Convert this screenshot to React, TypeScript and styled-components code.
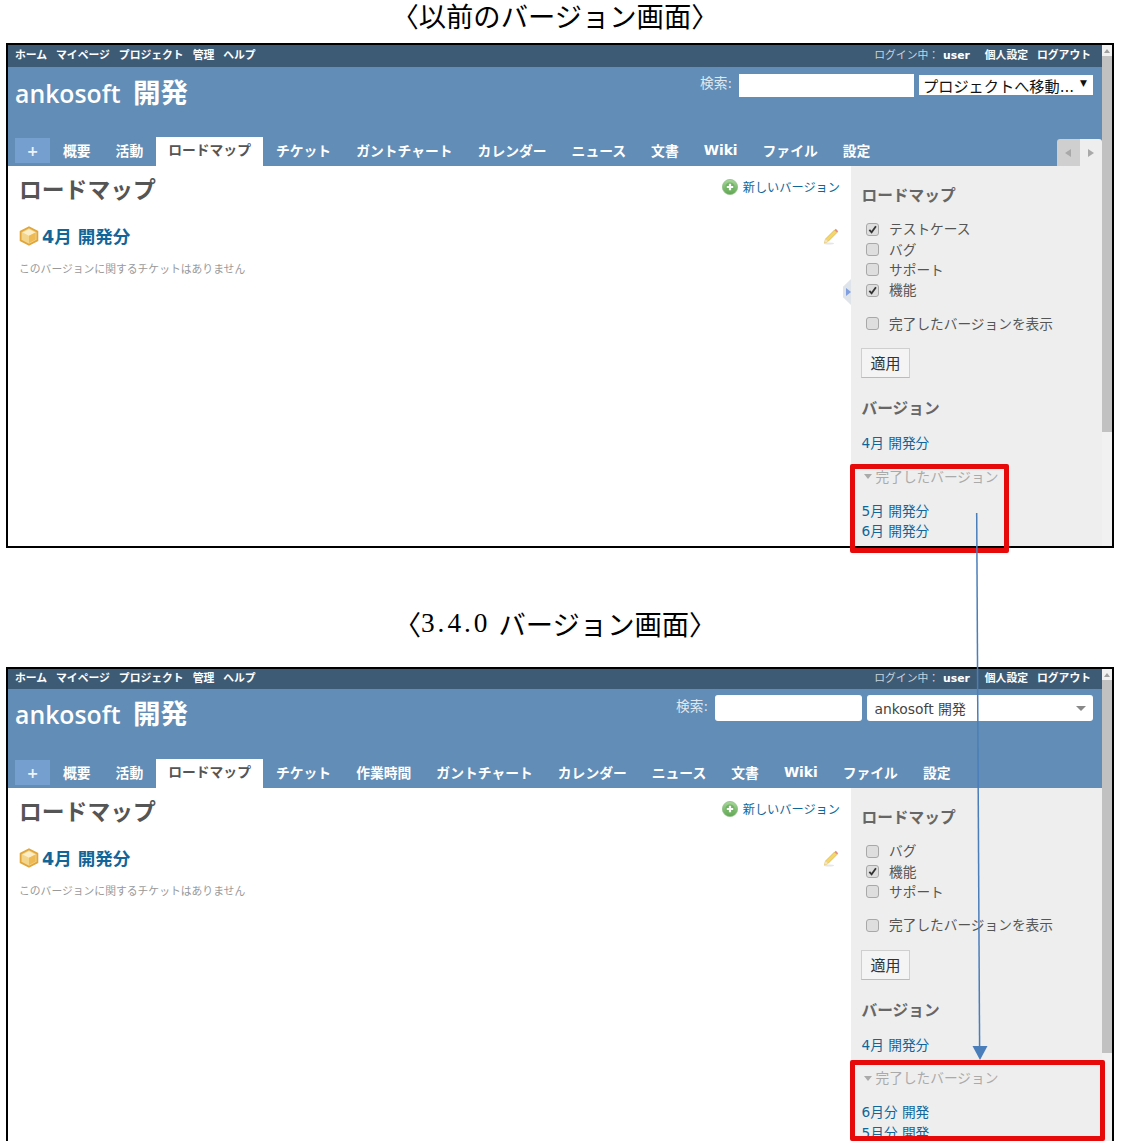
import React from 'react';
import styled, { createGlobalStyle } from 'styled-components';

const GlobalStyle = createGlobalStyle`
  html, body {
    margin: 0;
    padding: 0;
    background: #fff;
  }
  body {
    font-family: "DejaVu Sans", "Noto Sans CJK JP", sans-serif;
  }
`;

const Page = styled.div`
  position: relative;
  width: 1126px;
  height: 1147px;
  overflow: hidden;
`;

const Caption = styled.div<{ $height: number; $bottom: number }>`
  width: 1110px;
  height: ${(p) => p.$height}px;
  display: flex;
  align-items: flex-end;
  justify-content: center;
  padding-bottom: ${(p) => p.$bottom}px;
  box-sizing: border-box;
  font-family: "Noto Sans CJK JP", sans-serif;
  font-size: 27.3px;
  font-weight: 400;
  line-height: 28px;
  white-space: pre;
  color: #000;
`;

const CaptionNumber = styled.span`
  font-family: "Liberation Serif", serif;
  letter-spacing: 3px;
  margin-right: 8px;
`;

const Frame = styled.div<{ $height: number; $open?: boolean }>`
  display: flex;
  box-sizing: border-box;
  width: 1108px;
  height: ${(p) => p.$height}px;
  margin-left: 6px;
  border: 2px solid #000;
  border-bottom: ${(p) => (p.$open ? 'none' : '2px solid #000')};
  overflow: hidden;
`;

const Viewport = styled.div`
  display: flex;
  flex-direction: column;
  width: 1094px;
  flex: none;
`;

const TopMenu = styled.div<{ $height: number }>`
  display: flex;
  align-items: center;
  justify-content: space-between;
  box-sizing: border-box;
  height: ${(p) => p.$height}px;
  padding: 0 11px 4px 7px;
  background: #3e5b76;
  font-size: 10.8px;
  font-weight: 700;
  color: #fff;
  flex: none;
`;

const MenuGroup = styled.div`
  display: flex;
  gap: 9px;
  align-items: center;
`;

const LoggedAs = styled.span`
  font-weight: 400;
  color: #c9d4de;
  margin-right: 6px;
  b {
    font-weight: 700;
    color: #fff;
    margin-left: 4px;
  }
`;

const Header = styled.div`
  position: relative;
  display: flex;
  flex-direction: column;
  justify-content: space-between;
  height: 99px;
  background: #628db6;
  flex: none;
`;

const HeaderTop = styled.div<{ $modern?: boolean }>`
  display: flex;
  justify-content: space-between;
  align-items: flex-start;
  padding: ${(p) => (p.$modern ? '6px 9px 0 7px' : '7px 9px 0 7px')};
`;

const Title = styled.h1`
  margin: 3px 0 0;
  font-family: "Open Sans", "Noto Sans CJK JP", sans-serif;
  font-size: 24.8px;
  line-height: 32px;
  font-weight: 600;
  word-spacing: 6px;
  color: #fff;
`;

const TitleKanji = styled.span`
  font-size: 27.5px;
`;

const SearchBox = styled.div`
  display: flex;
  align-items: flex-start;
  gap: 5px;
`;

const SearchLabel = styled.span<{ $modern?: boolean }>`
  font-size: 13.7px;
  line-height: 18px;
  margin-top: ${(p) => (p.$modern ? 2 : 0)}px;
  margin-right: 2px;
  color: #dfe8f0;
`;

const SearchInput = styled.div<{ $modern?: boolean }>`
  width: ${(p) => (p.$modern ? 147 : 175)}px;
  height: ${(p) => (p.$modern ? 26 : 23)}px;
  background: #fff;
  border-radius: ${(p) => (p.$modern ? 3 : 0)}px;
`;

const PlainJump = styled.div`
  display: flex;
  align-items: center;
  justify-content: space-between;
  box-sizing: border-box;
  width: 174px;
  height: 20px;
  margin-top: 1px;
  padding: 0 6px 0 4px;
  background: #fff;
  font-size: 15.2px;
  color: #111;
  white-space: nowrap;
  i {
    font-style: normal;
    font-size: 9px;
    line-height: 10px;
    margin-bottom: 4px;
  }
`;

const RichJump = styled.div`
  display: flex;
  align-items: center;
  justify-content: space-between;
  box-sizing: border-box;
  width: 226px;
  height: 26px;
  padding: 0 7px 0 7.5px;
  background: #fff;
  border-radius: 3px;
  font-size: 13.9px;
  color: #444;
`;

const JumpArrow = styled.div`
  width: 0;
  height: 0;
  border-left: 5px solid transparent;
  border-right: 5px solid transparent;
  border-top: 5px solid #888;
`;

const Tabs = styled.div`
  display: flex;
  align-items: stretch;
  height: 29px;
  padding-left: 7px;
`;

const AddTab = styled.div`
  display: flex;
  align-items: center;
  justify-content: center;
  width: 35px;
  height: 25px;
  margin-top: 1px;
  padding-top: 1px;
  box-sizing: border-box;
  background: #759fcf;
  color: #eef3f8;
  font-size: 14px;
  font-weight: 700;
`;

const Tab = styled.div<{ $selected?: boolean }>`
  display: flex;
  align-items: center;
  padding: 0 12px ${(p) => (p.$selected ? 6 : 4)}px;
  margin-left: 1px;
  font-size: 13.8px;
  font-weight: 700;
  white-space: nowrap;
  color: ${(p) => (p.$selected ? '#555' : '#fff')};
  background: ${(p) => (p.$selected ? '#fff' : 'transparent')};
`;

const TabScroller = styled.div`
  position: absolute;
  right: 0;
  bottom: 0;
  display: flex;
  width: 45px;
  height: 27px;
  border-radius: 3px 3px 0 0;
  overflow: hidden;
`;

const ScrollSide = styled.div<{ $shade: string }>`
  display: flex;
  align-items: center;
  justify-content: center;
  flex: 1;
  background: ${(p) => p.$shade};
`;

const Main = styled.div`
  position: relative;
  display: flex;
  flex: 1;
  min-height: 0;
`;

const Content = styled.div`
  flex: 1;
  min-width: 0;
  padding: 12px 11px 0 11px;
  background: #fff;
`;

const TitleRow = styled.div`
  display: flex;
  justify-content: space-between;
  align-items: flex-start;
`;

const PageHeading = styled.h2`
  margin: 0;
  font-size: 22.8px;
  line-height: 24px;
  font-weight: 700;
  color: #555;
`;

const NewVersion = styled.a`
  display: flex;
  align-items: center;
  gap: 5px;
  height: 18px;
  font-size: 12.2px;
  color: #169;
`;

const VersionRow = styled.div`
  display: flex;
  align-items: center;
  justify-content: space-between;
  height: 24px;
  margin-top: 21px;
  padding-right: 1px;
  svg {
    margin-top: 2px;
  }
`;

const VersionName = styled.div`
  display: flex;
  align-items: center;
  gap: 3px;
  font-size: 17.5px;
  font-weight: 700;
  color: #169;
`;

const EmptyNote = styled.p`
  margin: 15px 0 0;
  font-size: 10.8px;
  line-height: 16px;
  color: #999;
`;

const Sidebar = styled.div`
  width: 251px;
  flex: none;
  box-sizing: border-box;
  padding: 20px 0 0 10.5px;
  background: #eee;
`;

const SideHeading = styled.h3<{ $gap: number }>`
  margin: ${(p) => p.$gap}px 0 0;
  font-size: 15.7px;
  line-height: 20px;
  font-weight: 700;
  color: #666;
`;

const CheckRows = styled.div`
  margin-top: 12px;
  margin-bottom: 13px;
`;

const CheckRow = styled.div`
  display: flex;
  align-items: center;
  gap: 10px;
  height: 20.4px;
  padding-left: 4.5px;
  font-size: 13.7px;
  color: #555;
`;

const CheckBox = styled.span`
  display: flex;
  align-items: center;
  justify-content: center;
  box-sizing: border-box;
  width: 13px;
  height: 13px;
  margin-top: 2px;
  border: 1px solid #a8a8a8;
  border-radius: 3px;
  background: #dedede;
  flex: none;
`;

const ApplyButton = styled.div`
  display: flex;
  align-items: center;
  justify-content: center;
  box-sizing: border-box;
  width: 49px;
  height: 30px;
  margin: 15px 0 0 -0.5px;
  border: 1px solid #cfcfcf;
  border-bottom-color: #bbb;
  background: #f4f4f4;
  font-size: 15px;
  color: #333;
`;

const SideLink = styled.div<{ $gap?: number }>`
  margin-top: ${(p) => p.$gap ?? 0}px;
  font-size: 13.7px;
  line-height: 20.6px;
  color: #169;
`;

const ClosedToggle = styled.div`
  display: flex;
  align-items: center;
  gap: 4px;
  margin-top: 13px;
  padding-left: 2px;
  font-size: 13.7px;
  line-height: 20px;
  color: #aaa;
`;

const DownMark = styled.span`
  width: 0;
  height: 0;
  border-left: 4px solid transparent;
  border-right: 4px solid transparent;
  border-top: 5px solid #aaa;
`;

const SideToggle = styled.div`
  position: absolute;
  right: 251px;
  top: 113px;
  display: flex;
  align-items: center;
  justify-content: flex-end;
  width: 8px;
  height: 26px;
  background: #dfe3ea;
  clip-path: polygon(100% 0, 100% 100%, 0 70%, 0 30%);
  &::after {
    content: '';
    border-left: 5px solid #7f9fe0;
    border-top: 4px solid transparent;
    border-bottom: 4px solid transparent;
  }
`;

const ScrollBar = styled.div`
  display: flex;
  flex-direction: column;
  width: 10px;
  flex: none;
  background: #f1f1f1;
`;

const ScrollUp = styled.div`
  display: flex;
  align-items: center;
  justify-content: center;
  height: 11px;
  background: #f1f1f1;
  &::after {
    content: '';
    border-left: 3px solid transparent;
    border-right: 3px solid transparent;
    border-bottom: 4px solid #a0a0a0;
  }
`;

const ScrollThumb = styled.div<{ $height: number }>`
  height: ${(p) => p.$height}px;
  background: #c1c1c1;
`;

const RedBox = styled.div<{ $left: number; $top: number; $width: number; $height: number }>`
  position: absolute;
  left: ${(p) => p.$left}px;
  top: ${(p) => p.$top}px;
  width: ${(p) => p.$width}px;
  height: ${(p) => p.$height}px;
  box-sizing: border-box;
  border: 5px solid #e60a0a;
  border-radius: 2px;
`;

const ArrowLayer = styled.svg`
  position: absolute;
  left: 0;
  top: 0;
  width: 1126px;
  height: 1147px;
  pointer-events: none;
`;

const CheckMark = () => (
  <svg width="9" height="9" viewBox="0 0 10 10">
    <path d="M1.5 5.5 L4 8.2 L8.8 1.5" fill="none" stroke="#333" strokeWidth="2" />
  </svg>
);

const PlusIcon = () => (
  <svg width="16" height="16" viewBox="0 0 16 16">
    <defs>
      <linearGradient id="plusGreen" x1="0" y1="0" x2="0" y2="1">
        <stop offset="0" stopColor="#a9d89c" />
        <stop offset="1" stopColor="#5fa552" />
      </linearGradient>
    </defs>
    <circle cx="8" cy="8" r="7.6" fill="url(#plusGreen)" stroke="#8fbf84" strokeWidth="0.8" />
    <circle cx="8" cy="8" r="4.6" fill="#6fb561" />
    <path d="M8 4.8 V11.2 M4.8 8 H11.2" stroke="#fff" strokeWidth="2.2" />
  </svg>
);

const PencilIcon = () => (
  <svg width="16" height="17" viewBox="0 0 16 17">
    <ellipse cx="6" cy="15.5" rx="5" ry="1" fill="#e6e6e6" />
    <path d="M11.5 2 L14 4.5 L5 13.5 L1.5 15 L2.5 11 Z" fill="#f3d76a" stroke="#d9b44a" strokeWidth="0.7" />
    <path d="M11.5 2 L12.8 0.8 L15.2 3.2 L14 4.5 Z" fill="#e58a8a" />
    <path d="M2.5 11 L5 13.5 L1.5 15 Z" fill="#f6e3c4" />
  </svg>
);

const PackageIcon = () => (
  <svg width="20" height="20" viewBox="0 0 20 20">
    <path
      d="M10 1.2 L18.4 5.6 V14.4 L10 18.8 L1.6 14.4 V5.6 Z"
      fill="#f3d58c"
      stroke="#e0a63c"
      strokeWidth="1.8"
      strokeLinejoin="round"
    />
    <path d="M10 3.2 L16.4 6.5 L10 9.8 L3.6 6.5 Z" fill="#fbeec8" />
    <path d="M10 9.8 V17 L16.6 13.6 V6.5 Z" fill="#eeba55" />
  </svg>
);

const ScrollTriangle = ({ left, color }: { left?: boolean; color: string }) => (
  <svg width="6" height="8" viewBox="0 0 6 8">
    <path d={left ? 'M6 0 V8 L0 4 Z' : 'M0 0 V8 L6 4 Z'} fill={color} />
  </svg>
);

interface ScreenProps {
  height: number;
  open?: boolean;
  modern?: boolean;
  menuHeight: number;
  thumbHeight: number;
  tabs: string[];
  trackers: { label: string; checked?: boolean }[];
  closed: string[];
}

const Screen: React.FC<ScreenProps> = ({ height, open, modern, menuHeight, thumbHeight, tabs, trackers, closed }) => (
  <Frame $height={height} $open={open}>
    <Viewport>
      <TopMenu $height={menuHeight}>
        <MenuGroup>
          <span>ホーム</span>
          <span>マイページ</span>
          <span>プロジェクト</span>
          <span>管理</span>
          <span>ヘルプ</span>
        </MenuGroup>
        <MenuGroup>
          <LoggedAs>
            ログイン中：<b>user</b>
          </LoggedAs>
          <span>個人設定</span>
          <span>ログアウト</span>
        </MenuGroup>
      </TopMenu>
      <Header>
        <HeaderTop $modern={modern}>
          <Title>
            ankosoft <TitleKanji>開発</TitleKanji>
          </Title>
          <SearchBox>
            <SearchLabel $modern={modern}>検索:</SearchLabel>
            <SearchInput $modern={modern} />
            {modern ? (
              <RichJump>
                ankosoft 開発
                <JumpArrow />
              </RichJump>
            ) : (
              <PlainJump>
                プロジェクトへ移動...
                <i>▼</i>
              </PlainJump>
            )}
          </SearchBox>
        </HeaderTop>
        <Tabs>
          <AddTab>+</AddTab>
          {tabs.map((tab) => (
            <Tab key={tab} $selected={tab === 'ロードマップ'}>
              {tab}
            </Tab>
          ))}
        </Tabs>
        {!modern && (
          <TabScroller>
            <ScrollSide $shade="#cfcfcf">
              <ScrollTriangle left color="#a9a9a9" />
            </ScrollSide>
            <ScrollSide $shade="#eeeeee">
              <ScrollTriangle color="#a9a9a9" />
            </ScrollSide>
          </TabScroller>
        )}
      </Header>
      <Main>
        <Content>
          <TitleRow>
            <PageHeading>ロードマップ</PageHeading>
            <NewVersion>
              <PlusIcon />
              新しいバージョン
            </NewVersion>
          </TitleRow>
          <VersionRow>
            <VersionName>
              <PackageIcon />
              4月 開発分
            </VersionName>
            <PencilIcon />
          </VersionRow>
          <EmptyNote>このバージョンに関するチケットはありません</EmptyNote>
        </Content>
        {!modern && <SideToggle />}
        <Sidebar>
          <SideHeading $gap={0}>ロードマップ</SideHeading>
          <CheckRows>
            {trackers.map((t) => (
              <CheckRow key={t.label}>
                <CheckBox>{t.checked && <CheckMark />}</CheckBox>
                {t.label}
              </CheckRow>
            ))}
          </CheckRows>
          <CheckRow>
            <CheckBox />
            完了したバージョンを表示
          </CheckRow>
          <ApplyButton>適用</ApplyButton>
          <SideHeading $gap={21}>バージョン</SideHeading>
          <SideLink $gap={14}>4月 開発分</SideLink>
          <ClosedToggle>
            <DownMark />
            完了したバージョン
          </ClosedToggle>
          <SideLink $gap={14}>{closed[0]}</SideLink>
          <SideLink>{closed[1]}</SideLink>
        </Sidebar>
      </Main>
    </Viewport>
    <ScrollBar>
      <ScrollUp />
      <ScrollThumb $height={thumbHeight} />
    </ScrollBar>
  </Frame>
);

const oldTabs = ['概要', '活動', 'ロードマップ', 'チケット', 'ガントチャート', 'カレンダー', 'ニュース', '文書', 'Wiki', 'ファイル', '設定'];
const newTabs = ['概要', '活動', 'ロードマップ', 'チケット', '作業時間', 'ガントチャート', 'カレンダー', 'ニュース', '文書', 'Wiki', 'ファイル', '設定'];

export default function App() {
  return (
    <Page>
      <GlobalStyle />
      <Caption $height={43} $bottom={14}>〈以前のバージョン画面〉</Caption>
      <Screen
        height={505}
        menuHeight={22}
        thumbHeight={376}
        tabs={oldTabs}
        trackers={[
          { label: 'テストケース', checked: true },
          { label: 'バグ' },
          { label: 'サポート' },
          { label: '機能', checked: true },
        ]}
        closed={['5月 開発分', '6月 開発分']}
      />
      <Caption $height={119} $bottom={30}>
        〈<CaptionNumber>3.4.0</CaptionNumber>バージョン画面〉
      </Caption>
      <Screen
        height={474}
        open
        modern
        menuHeight={20}
        thumbHeight={373}
        tabs={newTabs}
        trackers={[{ label: 'バグ' }, { label: '機能', checked: true }, { label: 'サポート' }]}
        closed={['6月分 開発', '5月分 開発']}
      />
      <RedBox $left={850} $top={464} $width={159} $height={89} />
      <RedBox $left={850} $top={1060} $width={255} $height={81} />
      <ArrowLayer viewBox="0 0 1126 1147">
        <path d="M976.7 513 L979.6 1048" fill="none" stroke="#4a7ebb" strokeWidth="1.5" />
        <path d="M972.5 1046 H987.5 L980 1060 Z" fill="#4a7ebb" />
      </ArrowLayer>
    </Page>
  );
}
